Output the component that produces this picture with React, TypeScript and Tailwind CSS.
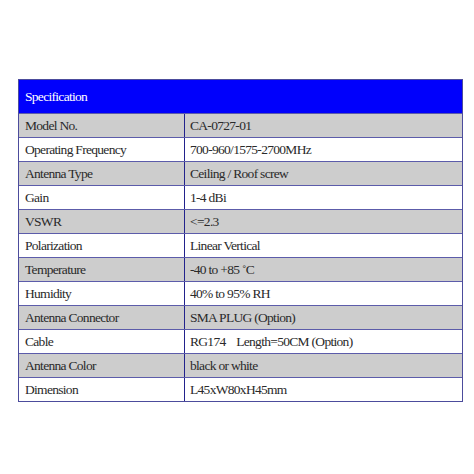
const rows: [string, string][] = [
  ['Model No.', 'CA-0727-01'],
  ['Operating Frequency', '700-960/1575-2700MHz'],
  ['Antenna Type', 'Ceiling / Roof screw'],
  ['Gain', '1-4 dBi'],
  ['VSWR', '<=2.3'],
  ['Polarization', 'Linear Vertical'],
  ['Temperature', '-40 to +85 ˚C'],
  ['Humidity', '40% to 95% RH'],
  ['Antenna Connector', 'SMA PLUG (Option)'],
  ['Cable', 'RG174    Length=50CM (Option)'],
  ['Antenna Color', 'black or white'],
  ['Dimension', 'L45xW80xH45mm'],
];

export default function App() {
  return (
    <div
      className="w-[474px] h-[474px] bg-white pt-[79px] pl-[18px]"
      style={{ fontFamily: '"Liberation Serif", "Times New Roman", serif' }}
    >
      <div className="w-[445px] border border-[#4c4c9c] text-[13.5px] text-[#2a2a2a] tracking-[-0.7px]">
        <div className="h-[33px] bg-[#0000fc] text-white flex items-center pl-[6px] pt-[1px]">
          Specification
        </div>
        {rows.map(([label, value], i) => (
          <div
            key={label}
            className={
              'flex h-[24px] border-t-[1.5px] border-[#5c5caa] ' +
              (i % 2 === 0 ? 'bg-[#cdcdcd]' : 'bg-white')
            }
          >
            <div className="w-[166px] shrink-0 border-r-[1.5px] border-[#22228c] pl-[6px] pt-[1px] flex items-center">
              {label}
            </div>
            <div className="pl-[5px] pt-[1px] flex items-center whitespace-pre">{value}</div>
          </div>
        ))}
      </div>
    </div>
  );
}
